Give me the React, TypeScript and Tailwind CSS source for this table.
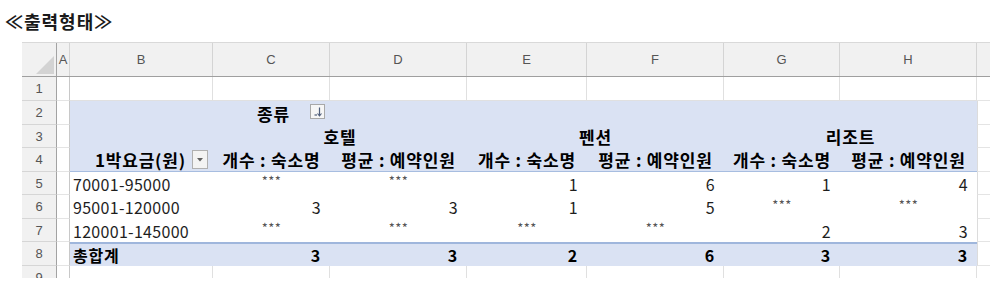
import React from "react";

const FONT = "font-['Noto_Sans_CJK_KR','Noto_Sans',sans-serif]";

function RowNum({ n }: { n: string }) {
  return (
    <div className="w-[35px] shrink-0 flex items-center justify-center bg-[#f1f1f1] border-b border-r border-b-[#d6d6d6] border-r-[#a3a3a3] text-[13px] text-[#555] font-['Liberation_Sans',sans-serif] leading-none">
      {n}
    </div>
  );
}

function ColA() {
  return <div className="w-[13px] shrink-0 border-r border-b border-r-[#c8c8c8] border-b-[#e4e4e4] bg-white" />;
}

function ColI() {
  return <div className="w-[13px] shrink-0 border-l border-b border-l-[#dcdcdc] border-b-[#e4e4e4] bg-white" />;
}

function Stars() {
  return <span className="text-[13px] text-[#555] leading-none -translate-y-[3px] tracking-[0.5px]">***</span>;
}

function SortButton() {
  return (
    <div className="absolute right-[5px] top-[3px] w-[15px] h-[15px] border border-[#a8a8a8] bg-[#f6f6f6] flex items-center justify-center">
      <svg width="11" height="11" viewBox="0 0 11 11">
        <path d="M7.5 1.5V9.5" stroke="#4e5d7a" strokeWidth="1.2" fill="none" />
        <path d="M5.5 7.5L7.5 9.8L9.5 7.5" stroke="#4e5d7a" strokeWidth="1.1" fill="none" />
        <path d="M2.5 9H5" stroke="#4e5d7a" strokeWidth="1.2" fill="none" />
      </svg>
    </div>
  );
}

function DropButton() {
  return (
    <div className="absolute right-[5px] top-[2px] w-[16px] h-[19px] border border-[#b0b0b0] bg-[#f3f3f3] flex items-center justify-center">
      <svg width="8" height="5" viewBox="0 0 8 5">
        <path d="M1 1H7L4 4.5Z" fill="#606060" />
      </svg>
    </div>
  );
}

const WIDTHS = ["w-[117px]", "w-[137px]", "w-[120px]", "w-[137px]", "w-[116px]", "w-[137px]"];

function DataRow({
  n,
  h,
  label,
  vals,
  bold,
}: {
  n: string;
  h: string;
  label: string;
  vals: string[];
  bold?: boolean;
}) {
  return (
    <div className={`flex ${h}`}>
      <RowNum n={n} />
      <ColA />
      <div
        className={`flex ${
          bold
            ? "bg-[#dae2f3] border-t-2 border-t-[#9fb6dc] font-bold text-black tracking-[0.8px]"
            : "bg-white text-[#1e1e1e] tracking-[0.3px]"
        }`}
      >
        <div className="w-[143px] flex items-center pl-[3px] text-[16px] leading-none">{label}</div>
        {vals.map((v, i) => (
          <div
            key={i}
            className={`${WIDTHS[i]} flex items-center ${
              v === "***" ? "justify-center" : "justify-end pr-[9px]"
            } text-[16px] leading-none`}
          >
            {v === "***" ? <Stars /> : v}
          </div>
        ))}
      </div>
      <ColI />
    </div>
  );
}

export default function App() {
  const letters = [
    { l: "A", w: "w-[13px]" },
    { l: "B", w: "w-[143px]" },
    { l: "C", w: "w-[117px]" },
    { l: "D", w: "w-[137px]" },
    { l: "E", w: "w-[120px]" },
    { l: "F", w: "w-[137px]" },
    { l: "G", w: "w-[116px]" },
    { l: "H", w: "w-[137px]" },
  ];
  return (
    <div className={`w-[1002px] h-[293px] bg-white overflow-hidden ${FONT}`}>
      <div className="h-[42px] pl-[5px] pt-[9px] text-[18px] font-bold leading-[24px] text-[#1a1a1a] tracking-[1px]">
        ≪출력형태≫
      </div>
      <div className="ml-[22px] w-[968px] h-[236px] overflow-hidden border-t border-t-[#d9d9d9]">
        {/* column header */}
        <div className="flex h-[34px] bg-[#f1f1f1] border-b border-b-[#9f9f9f] font-['Liberation_Sans',sans-serif] text-[13px] text-[#555]">
          <div className="w-[35px] shrink-0 relative border-r border-r-[#a3a3a3]">
            <svg className="absolute right-[2px] bottom-[2px]" width="18" height="18" viewBox="0 0 18 18">
              <polygon points="0,18 18,0 18,18" fill="#d3d3d3" />
            </svg>
          </div>
          {letters.map((c) => (
            <div
              key={c.l}
              className={`${c.w} shrink-0 flex items-center justify-center border-r border-r-[#d4d4d4]`}
            >
              {c.l}
            </div>
          ))}
          <div className="w-[13px] shrink-0" />
        </div>

        {/* row 1 */}
        <div className="flex h-[24px]">
          <RowNum n="1" />
          <ColA />
          {letters.slice(1).map((c) => (
            <div key={c.l} className={`${c.w} shrink-0 border-r border-b border-r-[#e0e0e0] border-b-[#e0e0e0]`} />
          ))}
          <div className="w-[13px] shrink-0 border-b border-b-[#e4e4e4]" />
        </div>

        {/* row 2 */}
        <div className="flex h-[24px]">
          <RowNum n="2" />
          <ColA />
          <div className="flex bg-[#dae2f3] text-[17px] font-bold text-black leading-none tracking-[0.8px]">
            <div className="w-[143px]" />
            <div className="w-[117px] relative flex items-center justify-center pl-[4px]">
              종류
              <SortButton />
            </div>
            <div className="w-[647px]" />
          </div>
          <ColI />
        </div>

        {/* row 3 */}
        <div className="flex h-[23px]">
          <RowNum n="3" />
          <ColA />
          <div className="flex bg-[#dae2f3] text-[17px] font-bold text-black leading-none tracking-[0.8px]">
            <div className="w-[143px]" />
            <div className="w-[254px] flex items-center justify-center">호텔</div>
            <div className="w-[257px] flex items-center justify-center">펜션</div>
            <div className="w-[253px] flex items-center justify-center">리조트</div>
          </div>
          <ColI />
        </div>

        {/* row 4 */}
        <div className="flex h-[24px]">
          <RowNum n="4" />
          <ColA />
          <div className="flex bg-[#dae2f3] border-b border-b-[#a7bde0] text-[17px] font-bold text-black leading-none tracking-[0.8px]">
            <div className="w-[143px] relative flex items-center justify-center pr-[2px]">
              1박요금(원)
              <DropButton />
            </div>
            <div className="w-[117px] flex items-center justify-center">개수 : 숙소명</div>
            <div className="w-[137px] flex items-center justify-center">평균 : 예약인원</div>
            <div className="w-[120px] flex items-center justify-center">개수 : 숙소명</div>
            <div className="w-[137px] flex items-center justify-center">평균 : 예약인원</div>
            <div className="w-[116px] flex items-center justify-center">개수 : 숙소명</div>
            <div className="w-[137px] flex items-center justify-center">평균 : 예약인원</div>
          </div>
          <ColI />
        </div>

        <DataRow n="5" h="h-[23px]" label="70001-95000" vals={["***", "***", "1", "6", "1", "4"]} />
        <DataRow n="6" h="h-[24px]" label="95001-120000" vals={["3", "3", "1", "5", "***", "***"]} />
        <DataRow n="7" h="h-[23px]" label="120001-145000" vals={["***", "***", "***", "***", "2", "3"]} />
        <DataRow n="8" h="h-[24px]" label="총합계" vals={["3", "3", "2", "6", "3", "3"]} bold />

        {/* row 9 (cut off) */}
        <div className="flex h-[24px]">
          <RowNum n="9" />
          <ColA />
          {letters.slice(1).map((c) => (
            <div key={c.l} className={`${c.w} shrink-0 border-r border-b border-r-[#e0e0e0] border-b-[#e0e0e0]`} />
          ))}
          <div className="w-[13px] shrink-0 border-b border-b-[#e4e4e4]" />
        </div>
      </div>
    </div>
  );
}
